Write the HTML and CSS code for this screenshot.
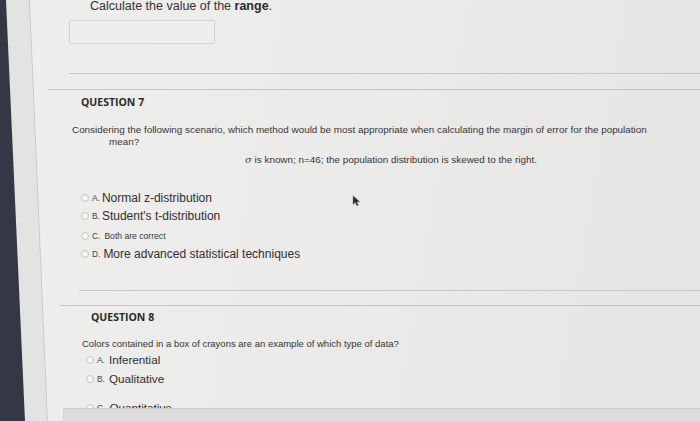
FILE: index.html
```html
<!DOCTYPE html>
<html lang="en">
  <head>
    <meta charset="UTF-8" />
    <meta name="viewport" content="width=device-width, initial-scale=1.0" />
    <title>Quiz</title>
    <link rel="stylesheet" href="styles.css">
  </head>
  <body>
    <div class="screen">
      <div class="bezel"></div>
      <div class="sidebar-edge"></div>

      <main class="page">
        <!-- previous question (scrolled) -->
        <p class="prompt">Calculate the value of the <b>range</b>.</p>
        <div class="answer-box"></div>
        <hr class="rule rule-inner">
        <hr class="rule rule-outer">

        <!-- question 7 -->
        <section class="question q7">
          <h2 class="question-title">QUESTION 7</h2>
          <p class="question-text">Considering the following scenario, which method would be most appropriate when calculating the margin of error for the population<br>mean?</p>
          <p class="scenario"><i class="sigma">σ</i> is known; n=46; the population distribution is skewed to the right.</p>

          <ul class="options">
            <li class="option opt-a"><span class="radio"></span><span class="letter">A.</span><span class="label">Normal z-distribution</span></li>
            <li class="option opt-b"><span class="radio"></span><span class="letter">B.</span><span class="label">Student's t-distribution</span></li>
            <li class="option opt-c"><span class="radio"></span><span class="letter">C.</span><span class="label small">Both are correct</span></li>
            <li class="option opt-d"><span class="radio"></span><span class="letter">D.</span><span class="label">More advanced statistical techniques</span></li>
          </ul>
        </section>

        <hr class="rule rule-inner q8-inner">
        <hr class="rule rule-outer q8-outer">

        <!-- question 8 -->
        <section class="question q8">
          <h2 class="question-title">QUESTION 8</h2>
          <p class="question-text">Colors contained in a box of crayons are an example of which type of data?</p>
          <ul class="options">
            <li class="option"><span class="radio"></span><span class="letter">A.</span><span class="label">Inferential</span></li>
            <li class="option"><span class="radio"></span><span class="letter">B.</span><span class="label">Qualitative</span></li>
            <li class="option opt-last"><span class="radio"></span><span class="letter">C.</span><span class="label">Quantitative</span></li>
          </ul>
        </section>
      </main>

      <svg class="cursor" width="9" height="12" viewBox="0 0 10 14">
        <path d="M1 1 L1 11 L3.6 8.6 L5.4 12.6 L7 11.9 L5.3 8 L8.8 8 Z" fill="#2a2a2a" stroke="#666" stroke-width="0.5"/>
      </svg>
      <div class="footer-bar"></div>
    </div>
  </body>
</html>
```

FILE: styles.css
```css
* {
  padding: 0;
  margin: 0;
  box-sizing: border-box;
}

body {
  width: 700px;
  height: 421px;
  overflow: hidden;
  font-family: "Liberation Sans", Arial, sans-serif;
  color: #3a3a3a;
  background: #e8e8e6;
}

ul {
  list-style: none;
}

.screen {
  position: relative;
  width: 700px;
  height: 421px;
  overflow: hidden;
  background: linear-gradient(100deg, #eeeeec 0%, #ebebe9 45%, #e5e5e3 100%);
}

/* monitor frame seen at the left edge of the photo */
.bezel {
  position: absolute;
  top: 0;
  left: 0;
  width: 30px;
  height: 421px;
  background: #353744;
  clip-path: polygon(0 0, 6px 0, 25px 421px, 0 421px);
  z-index: 3;
}

.sidebar-edge {
  position: absolute;
  top: 0;
  left: 0;
  width: 60px;
  height: 421px;
  background: #e3e3e1;
  clip-path: polygon(6px 0, 30px 0, 48px 421px, 25px 421px);
  z-index: 2;
}

.sidebar-edge::after {
  content: "";
  position: absolute;
  inset: 0;
  background: #c9c9c7;
  clip-path: polygon(29px 0, 30px 0, 48px 421px, 47px 421px);
}

.page {
  display: flex;
  flex-direction: column;
}

.prompt {
  padding-left: 90px;
  margin-top: -1px;
  font-size: 12.5px;
  line-height: 15px;
  color: #333;
}

.prompt b {
  font-weight: bold;
  color: #2b2b2b;
}

.answer-box {
  width: 146px;
  height: 24px;
  margin: 6px 0 0 69px;
  border: 1px solid #d3d3d1;
  border-radius: 2px;
  background: #eeeeec;
}

.rule {
  border: none;
  border-top: 1px solid #c8c8c6;
}

.rule-inner {
  margin: 29px 0 0 69px;
}

.rule-outer {
  margin: 15px 0 0 48px;
  border-top-color: #c4c4c2;
}

.question-title {
  font-family: "Open Sans", "Noto Sans", sans-serif;
  font-size: 10.5px;
  font-weight: 700;
  line-height: 14px;
  color: #2a2a2a;
}

.q7 .question-title {
  margin-top: 5px;
  padding-left: 81px;
}

.q7 .question-text {
  margin-top: 15px;
  padding-left: 109px;
  text-indent: -37px;
  font-size: 9.9px;
  line-height: 12px;
  color: #363636;
}

.scenario {
  margin-top: 6px;
  padding-left: 245px;
  font-size: 9.9px;
  line-height: 12px;
  color: #363636;
}

.sigma {
  font-family: "DejaVu Serif", serif;
  font-size: 10px;
  color: #4a4a5a;
}

.options {
  display: flex;
  flex-direction: column;
}

.option {
  display: flex;
  align-items: center;
  height: 18px;
  color: #333;
}

.radio {
  width: 8px;
  height: 8px;
  margin-right: 3px;
  border: 1px solid #c6c6c6;
  border-radius: 50%;
  background: #f4f4f3;
}

.letter {
  font-size: 8.4px;
  margin-right: 2px;
  color: #444;
}

.label {
  font-size: 12px;
  color: #2f2f2f;
}

.label.small {
  font-size: 8.6px;
  margin-left: 2px;
  color: #3a3a3a;
}

.q7 .options {
  margin-top: 23px;
  padding-left: 81px;
}

.opt-c {
  height: 20px;
  margin-top: 1px;
}

.opt-d {
  margin-top: -1px;
}

.opt-d .letter {
  margin-right: 3px;
}

.q8-inner {
  margin: 27px 0 0 79px;
}

.q8-outer {
  margin: 14px 0 0 60px;
}

.q8 .question-title {
  margin-top: 4px;
  padding-left: 91px;
}

.q8 .question-text {
  margin-top: 14px;
  padding-left: 82px;
  font-size: 9.5px;
  line-height: 12px;
  color: #363636;
}

.q8 .options {
  padding-left: 86px;
}

.q8 .option {
  height: 19px;
}

.q8 .label {
  font-size: 11.7px;
  margin-left: 2px;
}

.q8 .opt-last {
  margin-top: 10px;
}

.cursor {
  position: absolute;
  left: 352px;
  top: 195px;
}

.footer-bar {
  position: absolute;
  left: 63px;
  right: 0;
  bottom: 0;
  height: 13px;
  background: #dcdcda;
  border-top: 1px solid #cfcfcd;
  border-left: 1px solid #d6d6d4;
  z-index: 1;
}
```
